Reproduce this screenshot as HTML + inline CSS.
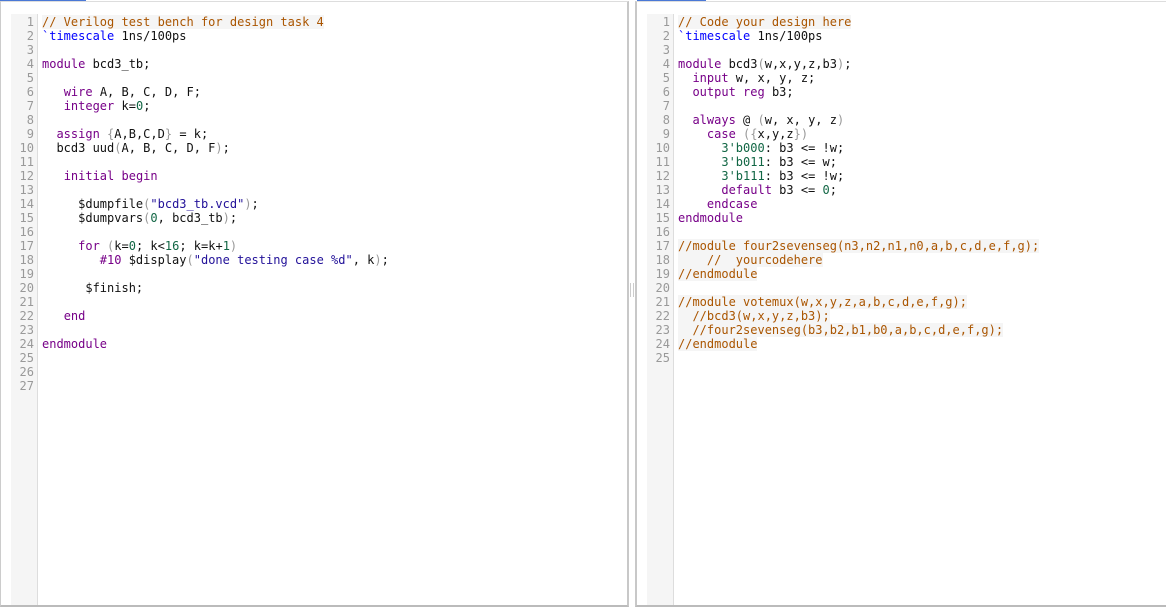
<!DOCTYPE html>
<html><head><meta charset="utf-8"><style>
*{margin:0;padding:0;box-sizing:border-box}
body{width:1166px;height:608px;background:#fff;position:relative;overflow:hidden;font-family:"DejaVu Sans Mono","Liberation Mono",monospace;font-size:12px}
.pane{position:absolute;top:1px;height:606px;border-top:1px solid #ddd;border-bottom:2px solid #bbb}
#L{left:0;width:629px;border-left:1px solid #ccc;border-right:2px solid #c8c8c8}
#R{left:635px;width:531px;border-left:2px solid #c8c8c8}
.tab{position:absolute;top:0;height:2px;background:#4a78d6}
.gut{position:absolute;top:12px;bottom:0;width:27px;background:#f5f5f5;border-right:1px solid #ddd}
.ln{position:absolute;right:3px;top:1px;text-align:right;color:#999;line-height:14px}
.code{position:absolute;top:13px;line-height:14px;white-space:pre;color:#111}
.c{color:#a50;background:#f5f5f5}
.k{color:#708}
.m{color:#00f}
.n{color:#164}
.s{color:#219}
.p{color:#999}
.grip{position:absolute;left:630px;top:283px;width:4px;height:14px;border-left:1px solid #ccc;border-right:1px solid #ccc}
</style></head><body>
<div class="tab" style="left:0;width:86px"></div>
<div class="tab" style="left:637px;width:69px"></div>
<div class="pane" id="L">
<div class="gut" style="left:10px"><div class="ln">1<br>2<br>3<br>4<br>5<br>6<br>7<br>8<br>9<br>10<br>11<br>12<br>13<br>14<br>15<br>16<br>17<br>18<br>19<br>20<br>21<br>22<br>23<br>24<br>25<br>26<br>27</div></div>
<div class="code" style="left:41px"><span class="c">// Verilog test bench for design task 4</span>
<span class="m">`timescale</span> 1ns/100ps

<span class="k">module</span> bcd3_tb;

   <span class="k">wire</span> A, B, C, D, F;
   <span class="k">integer</span> k=<span class="n">0</span>;

  <span class="k">assign</span> <span class="p">{</span>A,B,C,D<span class="p">}</span> = k;
  bcd3 uud<span class="p">(</span>A, B, C, D, F<span class="p">)</span>;

   <span class="k">initial</span> <span class="k">begin</span>

     $dumpfile<span class="p">(</span><span class="s">"bcd3_tb.vcd"</span><span class="p">)</span>;
     $dumpvars<span class="p">(</span><span class="n">0</span>, bcd3_tb<span class="p">)</span>;

     <span class="k">for</span> <span class="p">(</span>k=<span class="n">0</span>; k&lt;<span class="n">16</span>; k=k+<span class="n">1</span><span class="p">)</span>
        <span class="k">#10</span> $display<span class="p">(</span><span class="s">"done testing case %d"</span>, k<span class="p">)</span>;

      $finish;

   <span class="k">end</span>

<span class="k">endmodule</span>
</div>
</div>
<div class="grip"></div>
<div class="pane" id="R">
<div class="gut" style="left:10px"><div class="ln">1<br>2<br>3<br>4<br>5<br>6<br>7<br>8<br>9<br>10<br>11<br>12<br>13<br>14<br>15<br>16<br>17<br>18<br>19<br>20<br>21<br>22<br>23<br>24<br>25</div></div>
<div class="code" style="left:41px"><span class="c">// Code your design here</span>
<span class="m">`timescale</span> 1ns/100ps

<span class="k">module</span> bcd3<span class="p">(</span>w,x,y,z,b3<span class="p">)</span>;
  <span class="k">input</span> w, x, y, z;
  <span class="k">output</span> <span class="k">reg</span> b3;

  <span class="k">always</span> @ <span class="p">(</span>w, x, y, z<span class="p">)</span>
    <span class="k">case</span> <span class="p">({</span>x,y,z<span class="p">})</span>
      <span class="n">3'b000</span>: b3 &lt;= !w;
      <span class="n">3'b011</span>: b3 &lt;= w;
      <span class="n">3'b111</span>: b3 &lt;= !w;
      <span class="k">default</span> b3 &lt;= <span class="n">0</span>;
    <span class="k">endcase</span>
<span class="k">endmodule</span>

<span class="c">//module four2sevenseg(n3,n2,n1,n0,a,b,c,d,e,f,g);</span>
<span class="c">    //  yourcodehere</span>
<span class="c">//endmodule</span>

<span class="c">//module votemux(w,x,y,z,a,b,c,d,e,f,g);</span>
<span class="c">  //bcd3(w,x,y,z,b3);</span>
<span class="c">  //four2sevenseg(b3,b2,b1,b0,a,b,c,d,e,f,g);</span>
<span class="c">//endmodule</span>
</div>
</div>
</body></html>
